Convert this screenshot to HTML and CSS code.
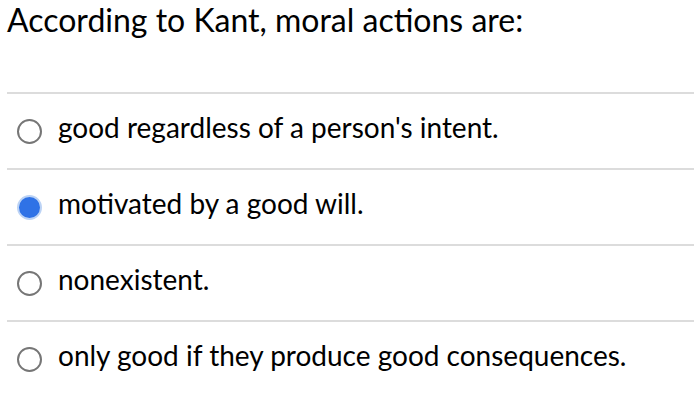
FILE: index.html
```html
<!DOCTYPE html>
<html>
<head>
<meta charset="utf-8">
<link rel="stylesheet" href="styles.css">
</head>
<body>
<div class="question">
  <h1 class="prompt">According to Kant, moral actions are:</h1>
  <ul class="options">
    <li class="option"><span class="radio"></span><span class="label">good regardless of a person's intent.</span></li>
    <li class="option"><span class="radio checked"></span><span class="label">motivated by a good will.</span></li>
    <li class="option"><span class="radio"></span><span class="label">nonexistent.</span></li>
    <li class="option"><span class="radio"></span><span class="label">only good if they produce good consequences.</span></li>
  </ul>
</div>
</body>
</html>
```
FILE: styles.css
```css
html, body { margin: 0; padding: 0; background: #fff; }
body { font-family: Lato, "Open Sans", sans-serif; color: #000; }
.question { padding: 0 0 0 7px; }
.prompt {
  margin: 0;
  padding: 0;
  font-size: 32px;
  font-weight: 400;
  line-height: 40px;
  height: 92px;
  box-sizing: border-box;
}
.options { list-style: none; margin: 0; padding: 0; }
.option {
  display: flex;
  align-items: center;
  height: 76px;
  border-top: 2px solid #dcdcdc;
  box-sizing: border-box;
}
.radio {
  width: 21px; height: 21px;
  border: 2px solid #767676;
  border-radius: 50%;
  margin-left: 10px;
  margin-right: 16px;
  box-sizing: content-box;
  flex: none;
}
.radio.checked {
  background: #2f72e6;
  border-color: #bcd3f5;
  box-shadow: inset 0 0 0 1px #2f72e6;
}
.label { font-size: 28px; line-height: 34px; padding-bottom: 8px; }
```
